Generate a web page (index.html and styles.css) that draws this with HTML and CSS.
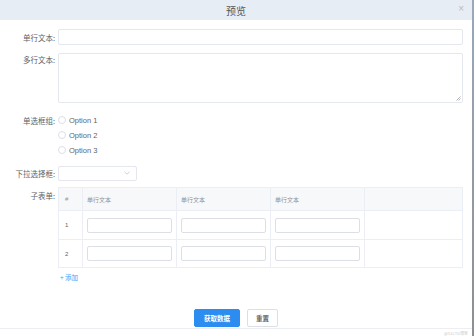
FILE: index.html
```html
<!DOCTYPE html>
<html lang="zh">
<head>
<meta charset="utf-8">
<link rel="stylesheet" href="styles.css">
</head>
<body>
<div class="dialog">
  <div class="header">
    <span class="title">预览</span>
    <span class="close">×</span>
  </div>
  <div class="body">
    <div class="item item-input">
      <label class="label">单行文本:</label>
      <div class="input"></div>
    </div>
    <div class="item item-textarea">
      <label class="label">多行文本:</label>
      <div class="textarea">
        <svg class="grip" width="5" height="5" viewBox="0 0 5 5"><path d="M4.5 0.5 L0.5 4.5 M4.5 2.5 L2.5 4.5" stroke="#999" stroke-width="0.7"/></svg>
      </div>
    </div>
    <div class="item item-radio">
      <label class="label">单选框组:</label>
      <div class="radios">
        <div class="radio"><span class="circle"></span><span>Option 1</span></div>
        <div class="radio"><span class="circle"></span><span>Option 2</span></div>
        <div class="radio"><span class="circle"></span><span>Option 3</span></div>
      </div>
    </div>
    <div class="item item-select">
      <label class="label">下拉选择框:</label>
      <div class="select">
        <svg width="6" height="4" viewBox="0 0 6 4"><path d="M0.5 0.8 L3 3.2 L5.5 0.8" fill="none" stroke="#c0c4cc" stroke-width="0.8"/></svg>
      </div>
    </div>
    <div class="item item-table">
      <label class="label">子表单:</label>
      <div class="table">
        <div class="tr th">
          <div class="td c0">#</div>
          <div class="td c1">单行文本</div>
          <div class="td c1">单行文本</div>
          <div class="td c1">单行文本</div>
          <div class="td c4"></div>
        </div>
        <div class="tr row">
          <div class="td c0">1</div>
          <div class="td c1"><div class="cell-input"></div></div>
          <div class="td c1"><div class="cell-input"></div></div>
          <div class="td c1"><div class="cell-input"></div></div>
          <div class="td c4"></div>
        </div>
        <div class="tr row row2">
          <div class="td c0">2</div>
          <div class="td c1"><div class="cell-input"></div></div>
          <div class="td c1"><div class="cell-input"></div></div>
          <div class="td c1"><div class="cell-input"></div></div>
          <div class="td c4"></div>
        </div>
      </div>
    </div>
    <div class="add">+ 添加</div>
  </div>
  <div class="footer">
    <button class="btn primary">获取数据</button>
    <button class="btn">重置</button>
  </div>
  <div class="bottom"><span class="wm">@51CTO博客</span></div>
</div>
</body>
</html>
```
FILE: styles.css
```css
* { box-sizing: border-box; }
html, body { margin: 0; padding: 0; }
body {
  width: 474px;
  height: 336px;
  overflow: hidden;
  background: linear-gradient(#9aa9b8, #8c8f94);
  font-family: "Noto Sans CJK SC", "Liberation Sans", sans-serif;
  color: #606266;
}
.dialog {
  width: 472px;
  height: 336px;
  background: #fff;
  display: flex;
  flex-direction: column;
}
.header {
  height: 20px;
  background: #e6edf5;
  display: flex;
  align-items: center;
  justify-content: center;
  position: relative;
}
.title {
  font-size: 10px;
  color: #555;
}
.close {
  position: absolute;
  right: 8px;
  top: 3px;
  font-size: 10px;
  color: #b8bcc2;
  font-family: "Liberation Sans", sans-serif;
}
.body {
  display: flex;
  flex-direction: column;
  padding: 9px 9px 0 0;
}
.item {
  display: flex;
  align-items: flex-start;
}
.label {
  width: 58px;
  flex: none;
  text-align: right;
  padding-right: 3px;
  font-size: 7.5px;
  color: #606266;
}
.item-input { height: 16px; align-items: center; }
.input {
  flex: 1;
  height: 16px;
  border: 1px solid #e4e7ed;
  border-radius: 2px;
}
.item-textarea { margin-top: 8px; }
.item-textarea .label { line-height: 14px; }
.textarea {
  flex: 1;
  height: 50px;
  border: 1px solid #e4e7ed;
  border-radius: 2px;
  position: relative;
}
.grip { position: absolute; right: 1px; bottom: 1px; }
.item-radio { margin-top: 9.5px; }
.item-radio .label { line-height: 15px; }
.radios { display: flex; flex-direction: column; }
.radio {
  height: 15px;
  display: flex;
  align-items: center;
  font-family: "Liberation Sans", sans-serif;
  font-size: 7.5px;
  color: #5f6266;
}
.circle {
  width: 8px;
  height: 8px;
  border: 1px solid #dcdfe6;
  border-radius: 50%;
  margin-right: 3px;
}
.item-select { margin-top: 8px; align-items: center; }
.select {
  width: 79px;
  height: 15px;
  border: 1px solid #e4e7ed;
  border-radius: 2px;
  display: flex;
  align-items: center;
  justify-content: flex-end;
  padding-right: 6px;
}
.item-table { margin-top: 6.5px; }
.item-table .label { line-height: 18px; }
.table {
  flex: 1;
  border: 1px solid #ebeef5;
  display: flex;
  flex-direction: column;
}
.tr { display: flex; }
.th { height: 22px; background: #f7f8fa; color: #909399; }
.row { height: 29px; border-top: 1px solid #ebeef5; }
.row2 { height: 28px; }
.td {
  display: flex;
  align-items: center;
  font-size: 6px;
  border-right: 1px solid #ebeef5;
}
.td:last-child { border-right: none; }
.c0 { width: 24px; padding-left: 6px; }
.c1 { width: 94px; padding-left: 4px; }
.c4 { flex: 1; }
.row .c0 { font-family: "Liberation Sans", sans-serif; color: #606266; }
.th .c0 { font-family: "Liberation Sans", sans-serif; }
.cell-input {
  width: 85px;
  height: 15px;
  border: 1px solid #dcdfe6;
  border-radius: 2px;
}
.add {
  margin: 3px 0 0 60px;
  height: 12px;
  font-size: 6.5px;
  color: #409eff;
  line-height: 12px;
}
.footer {
  margin-top: 26px;
  display: flex;
  justify-content: center;
  gap: 7px;
}
.btn {
  height: 18px;
  padding: 0;
  border: 1px solid #dcdfe6;
  background: #fff;
  border-radius: 2px;
  font-family: "Noto Sans CJK SC", sans-serif;
  font-size: 6.5px;
  color: #606266;
  font-weight: 600;
  width: 31px;
}
.btn.primary {
  width: 46px;
  background: #2d8cf0;
  border-color: #2d8cf0;
  color: #fff;
}
.bottom {
  margin-top: 1px;
  flex: 1;
  border-top: 1px solid #eceef1;
  display: flex;
  justify-content: flex-end;
  align-items: center;
  padding-right: 4px;
}
.wm { font-size: 4px; color: #c8cbd0; }
```
